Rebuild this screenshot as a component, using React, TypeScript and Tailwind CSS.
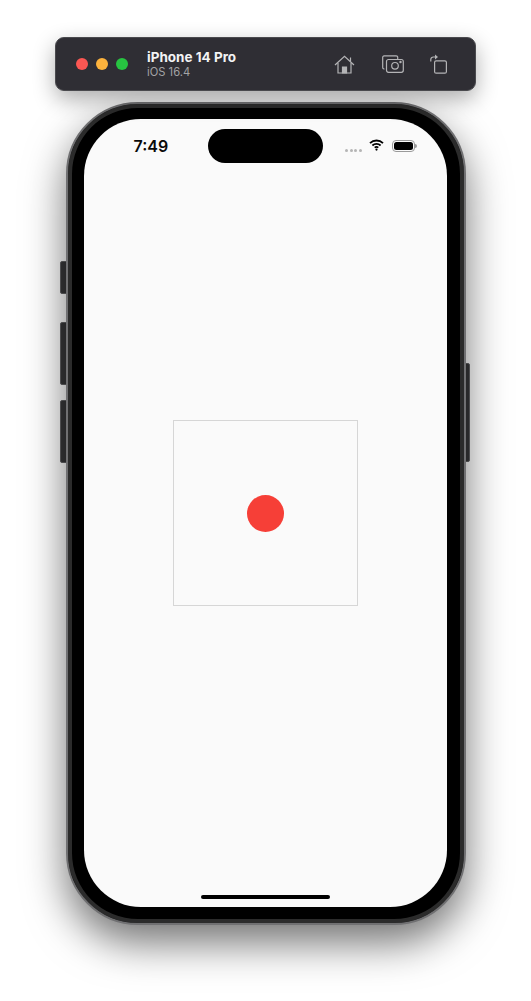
export default function App() {
  return (
    <div className="w-[531px] h-[1001px] bg-white flex flex-col items-center pt-[37px] overflow-hidden font-['Inter',sans-serif]">
      <div className="w-[421px] h-[54px] shrink-0 rounded-[9px] bg-[#2f2e34] border border-[#4a4a4e] shadow-[0_8px_22px_rgba(0,0,0,0.32)] flex items-center pl-5 pr-[28px] z-10">
        <div className="flex gap-2">
          <span className="w-3 h-3 rounded-full bg-[#fc5753]" />
          <span className="w-3 h-3 rounded-full bg-[#fdb33d]" />
          <span className="w-3 h-3 rounded-full bg-[#27c441]" />
        </div>
        <div className="ml-[19px] flex flex-col">
          <span className="text-[13.5px] leading-[15px] font-bold text-[#f3f3f4]">iPhone 14 Pro</span>
          <span className="text-[11.2px] leading-[14px] text-[#a3a3a6]">iOS 16.4</span>
        </div>
        <div className="ml-auto flex items-center text-[#b4b4b6]">
          <svg width="21" height="19" viewBox="0 0 21 19" fill="none" stroke="currentColor" strokeWidth="1.2">
            <path d="M1 10 10.500 1.200 20 10" />
            <path d="M4 8V18h13V8" />
            <path d="M16.500 2.500v4" />
            <path d="M8.500 18v-6h4v6z" fill="currentColor" />
          </svg>
          <svg className="ml-[27px]" width="22" height="18" viewBox="0 0 22 18" fill="none" stroke="currentColor" strokeWidth="1.2">
            <path d="M2.500 14H2A1.500 1.500 0 0 1 0.700 12.500v-10A1.500 1.500 0 0 1 2.200 0.800h12A1.500 1.500 0 0 1 15.700 2.300V4" />
            <rect x="4.500" y="4.500" width="16.800" height="12.800" rx="2" />
            <circle cx="13" cy="10.800" r="3.300" />
            <circle cx="18.500" cy="7" r="0.600" fill="currentColor" />
          </svg>
          <svg className="ml-[26px]" width="17" height="20" viewBox="0 0 17 20" fill="none" stroke="currentColor" strokeWidth="1.2">
            <rect x="4.600" y="6.800" width="11.800" height="12.400" rx="1.500" />
            <path d="M0.800 7.500V5.500A2.500 2.500 0 0 1 3.300 3H6" />
            <path d="M5 0.500 8 3 5 5.500z" fill="currentColor" stroke="none" />
          </svg>
        </div>
      </div>
      <div className="relative mt-[11px] w-[400px] h-[823px] shrink-0">
        <span className="absolute left-[-6px] top-[159px] w-[7px] h-[33px] rounded-l-[2px] bg-[#38383a] border border-[#636365]" />
        <span className="absolute left-[-6px] top-[220px] w-[7px] h-[63px] rounded-l-[2px] bg-[#38383a] border border-[#636365]" />
        <span className="absolute left-[-6px] top-[298px] w-[7px] h-[63px] rounded-l-[2px] bg-[#38383a] border border-[#636365]" />
        <span className="absolute right-[-4px] top-[261px] w-[5px] h-[99px] rounded-r-[2px] bg-[#38383a] border border-[#636365]" />
        <div className="w-full h-full rounded-[72px] bg-black border-2 border-[#707072] shadow-[inset_0_0_0_4px_#2b2b2b,0_18px_42px_rgba(0,0,0,0.55)] pt-[15px] pb-[16px] pl-[16px] pr-[17px] relative">
          <div className="w-full h-full rounded-[57px] bg-[#fafafa] flex flex-col relative">
            <div className="flex items-start h-[54px] shrink-0">
              <span className="ml-[50px] mt-[17px] text-[16px] leading-5 font-semibold text-[#0a0a0a]">7:49</span>
              <span className="ml-[40px] mt-[10px] w-[115px] h-[34px] rounded-full bg-black" />
              <div className="ml-[22px] mt-[30px] flex gap-[1.500px] h-[3px]">
                <span className="w-[3px] h-[3px] rounded-full bg-[#b5b5b5]" />
                <span className="w-[3px] h-[3px] rounded-full bg-[#b5b5b5]" />
                <span className="w-[3px] h-[3px] rounded-full bg-[#b5b5b5]" />
                <span className="w-[3px] h-[3px] rounded-full bg-[#b5b5b5]" />
              </div>
              <svg className="ml-[7px] mt-[20px]" width="15" height="12" viewBox="0 0 15 12" fill="none" stroke="#000" strokeWidth="1.800">
                <path d="M1 4.200C4.600 0.600 10.400 0.600 14 4.200" />
                <path d="M3.400 6.500C5.700 4.300 9.300 4.300 11.600 6.500" />
                <path d="M5.700 8.700C6.700 7.800 8.300 7.800 9.300 8.700" />
                <circle cx="7.500" cy="10.600" r="1.100" fill="#000" stroke="none" />
              </svg>
              <div className="ml-2 mt-[21px] flex items-center">
                <span className="w-[23px] h-[12px] rounded-[4px] border border-[#9a9a9a] p-[1px] flex">
                  <span className="flex-1 rounded-[2.500px] bg-black" />
                </span>
                <span className="w-[1.500px] h-1 ml-[0.500px] rounded-r-full bg-[#9a9a9a]" />
              </div>
            </div>
            <div className="flex-1 flex flex-col items-center pt-[247px]">
              <div className="w-[185px] h-[186px] border-[1.500px] border-[#d6d6d6] flex items-center justify-center">
                <span className="w-[37px] h-[37px] rounded-full bg-[#f63f37]" />
              </div>
              <span className="mt-auto mb-[8px] w-[129px] h-[4px] rounded-full bg-black" />
            </div>
          </div>
        </div>
      </div>
    </div>
  );
}
